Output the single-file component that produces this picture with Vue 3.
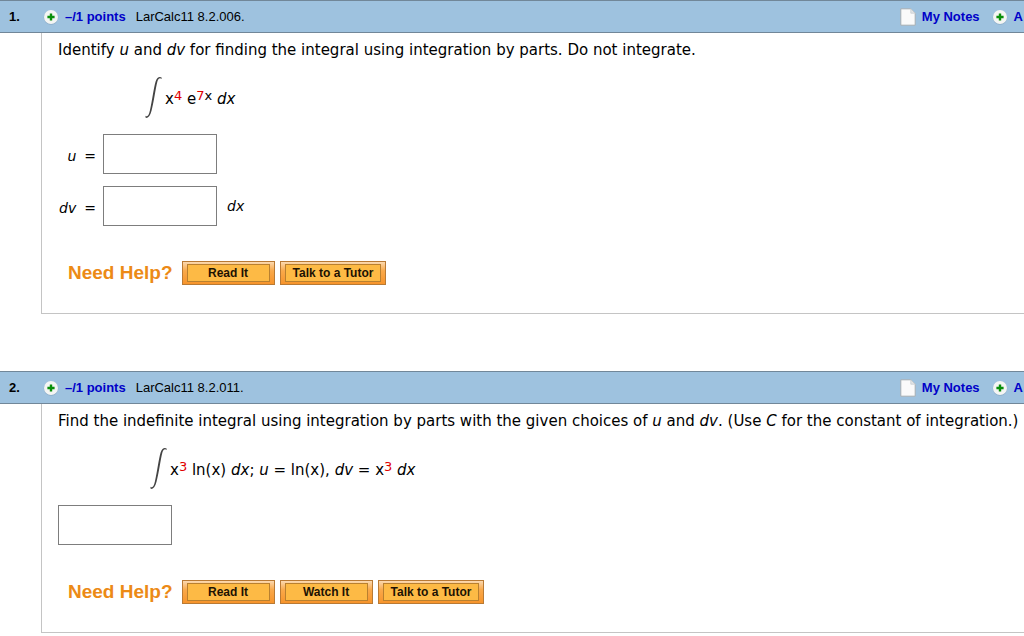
<script setup>
import { ref } from 'vue'

const v = (text) => ({ text, kind: 'var' })
const t = (text) => ({ text, kind: 'plain' })
const n = (text) => ({ text, kind: 'num' })
const sv = (text) => ({ text, kind: 'sup' })

const questions = [
  {
    id: 1,
    code: 'LarCalc11 8.2.006.',
    prompt: [t('Identify '), v('u'), t(' and '), v('dv'), t(' for finding the integral using integration by parts. Do not integrate.')],
    math: [t('x'), n('4'), t(' e'), n('7'), sv('x'), t(' '), v('dx')],
    indent: 'near',
    fields: [
      { key: 'u', label: 'u', after: '' },
      { key: 'dv', label: 'dv', after: 'dx' }
    ],
    help: ['Read It', 'Talk to a Tutor']
  },
  {
    id: 2,
    code: 'LarCalc11 8.2.011.',
    prompt: [t('Find the indefinite integral using integration by parts with the given choices of '), v('u'), t(' and '), v('dv'), t('. (Use '), v('C'), t(' for the constant of integration.)')],
    math: [t('x'), n('3'), t(' ln(x) '), v('dx'), t('; '), v('u'), t(' = ln(x), '), v('dv'), t(' = x'), n('3'), t(' '), v('dx')],
    indent: 'far',
    fields: [{ key: 'answer', label: '', after: '' }],
    help: ['Read It', 'Watch It', 'Talk to a Tutor']
  }
]

const answers = ref({})
</script>

<template>
  <main class="page">
    <section v-for="q in questions" :key="q.id" class="question">
      <header class="bar">
        <span class="number">{{ q.id }}.</span>
        <a class="points" href="#">
          <svg class="plus" width="16" height="16" viewBox="0 0 16 16" aria-hidden="true">
            <circle cx="8" cy="8.6" r="7.2" fill="#7f9db5" opacity=".6" />
            <circle cx="8" cy="8" r="7" fill="#f4f5f4" />
            <path d="M8 4.4v7.2M4.4 8h7.2" stroke="#0a8f0a" stroke-width="2.4" />
          </svg>
          <span>–/1 points</span>
        </a>
        <span class="code">{{ q.code }}</span>
        <nav class="tools">
          <a href="#" class="notes">
            <svg width="16" height="18" viewBox="0 0 16 18" aria-hidden="true">
              <path d="M.8 .8h10l4.4 4.4v12H.8z" fill="#fafafa" stroke="#a5adb3" />
              <path d="M10.8 .8v4.4h4.4z" fill="#e2e5e7" stroke="#c3c8cc" stroke-width=".7" />
            </svg>
            <span>My Notes</span>
          </a>
          <a href="#" class="ask">
            <svg width="16" height="16" viewBox="0 0 16 16" aria-hidden="true">
              <circle cx="8" cy="8.6" r="7.2" fill="#7f9db5" opacity=".6" />
              <circle cx="8" cy="8" r="7" fill="#f4f5f4" />
              <path d="M8 4.4v7.2M4.4 8h7.2" stroke="#0a8f0a" stroke-width="2.4" />
            </svg>
            <span>A</span>
          </a>
        </nav>
      </header>

      <div class="body">
        <p class="prompt"><span v-for="(p, i) in q.prompt" :key="i" :class="p.kind">{{ p.text }}</span></p>

        <div class="math" :class="q.indent">
          <svg width="18" height="43" viewBox="0 0 18 43" role="img" aria-label="integral">
            <path d="M16.4 3C15.4 1.6 13.4 1.8 12.4 5.6C10.6 12 9.2 25 6.6 34.6C5 40.6 2.6 43 .4 41.4L.6 39.8C2.6 41.4 3.8 39.4 4.9 34.6C7.2 24.5 8.6 12 10.6 5.4C12 1 15 .2 16.8 1.8Z" fill="#444" />
          </svg>
          <span class="expr"><span v-for="(p, i) in q.math" :key="i" :class="p.kind">{{ p.text }}</span></span>
        </div>

        <div class="fields">
          <div v-for="f in q.fields" :key="f.key" class="field">
            <label v-if="f.label" :for="`q${q.id}-${f.key}`"><i>{{ f.label }}</i><span>=</span></label>
            <input :id="`q${q.id}-${f.key}`" v-model="answers[`${q.id}-${f.key}`]" type="text" :aria-label="f.label ? undefined : 'Answer'" />
            <i v-if="f.after" class="after">{{ f.after }}</i>
          </div>
        </div>

        <div class="help">
          <span class="need">Need Help?</span>
          <button v-for="h in q.help" :key="h" type="button"><span>{{ h }}</span></button>
        </div>
      </div>
    </section>
  </main>
</template>

<style>
body {
  background: #fff;
}
</style>

<style scoped>
.page {
  color: #000;
  font: 14px/18px "DejaVu Sans", Verdana, sans-serif;
  overflow: hidden;
}
.question + .question {
  margin-top: 57px;
}
.bar {
  box-sizing: border-box;
  height: 33px;
  display: flex;
  align-items: center;
  padding: 0 1px 0 9px;
  border-top: 1px solid #718799;
  border-bottom: 1px solid #718799;
  background: #9ec2df;
  font: 13px/16px "Liberation Sans", Arial, sans-serif;
  white-space: nowrap;
}
.number {
  width: 34px;
  font-weight: bold;
}
.bar a {
  display: flex;
  align-items: center;
  color: #0000c8;
  font-weight: bold;
  text-decoration: none;
}
.points {
  gap: 6px;
}
.code {
  margin-left: 10px;
}
.tools {
  display: flex;
  margin-left: auto;
  gap: 12px;
}
.notes,
.ask {
  gap: 6px;
}
.body {
  margin-left: 41px;
  padding: 8px 0 28px 16px;
  border-left: 1px solid #c4c4c4;
  border-bottom: 1px solid #c4c4c4;
}
.prompt {
  margin: 0;
  font-size: 15px;
}
.var {
  font-style: italic;
}
.math {
  display: flex;
  align-items: center;
  margin-top: 17px;
  gap: 2px;
}
.near {
  padding-left: 87px;
}
.far {
  padding-left: 92px;
}
.expr {
  padding-top: 4px;
  font-size: 15px;
  white-space: pre;
}
.num,
.sup {
  position: relative;
  top: -4px;
  font-size: 13px;
}
.num {
  color: #e00000;
}
.fields {
  display: grid;
  gap: 12px;
  margin-top: 15px;
}
.field {
  display: flex;
  align-items: center;
}
.field label {
  display: flex;
  justify-content: flex-end;
  gap: 8px;
  width: 38px;
  margin-right: 7px;
  padding-top: 4px;
}
.field input {
  box-sizing: border-box;
  width: 114px;
  height: 40px;
  padding: 0 8px;
  border: 1px solid #7d7d7d;
  border-radius: 0;
  background: #fff;
  font: inherit;
}
.after {
  margin-left: 10px;
}
.help {
  display: flex;
  align-items: center;
  gap: 5px;
  margin-top: 35px;
  padding-left: 10px;
}
.need {
  margin-right: 4px;
  color: #ec8a16;
  font: bold 19px/22px "Liberation Sans", Arial, sans-serif;
}
.help button {
  box-sizing: border-box;
  min-width: 93px;
  height: 24px;
  padding: 2px 4px;
  border: 1px solid #b97a34;
  border-radius: 0;
  background: linear-gradient(#fbd9b0, #f9a94a 40%, #f7942b);
  color: #1c1203;
  font: bold 12px/16px "Liberation Sans", Arial, sans-serif;
}
.help button span {
  display: block;
  padding: 0 7px;
  border: 1px solid #b9802f;
  background: #fdba45;
}
</style>
